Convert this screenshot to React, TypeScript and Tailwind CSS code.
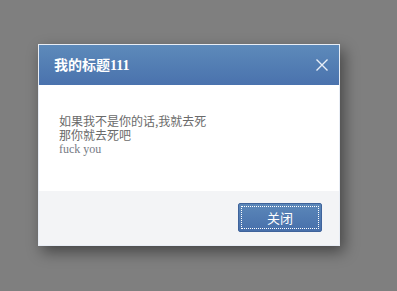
import React from "react";

export default function App() {
  return (
    <div className="w-[397px] h-[291px] bg-[#7f7f7f] pt-[44px] pl-[38px]" style={{ fontFamily: '"Liberation Serif", "Noto Sans CJK SC", serif' }}>
      <div className="w-[302px] h-[202px] border border-[#e8edf5] bg-white flex flex-col shadow-[4px_6px_14px_rgba(0,0,0,0.45)]">
        <div className="h-[40px] bg-gradient-to-b from-[#5d8aba] to-[#4a72ad] flex items-center justify-between pl-[15px] pr-[9px]">
          <span className="text-white text-[14px] font-bold" style={{ fontFamily: '"Liberation Serif", "Noto Sans CJK SC", serif' }}>我的标题111</span>
          <svg width="14" height="14" viewBox="0 0 14 14" className="mr-[1px]">
            <path d="M1.5 1.5 L12.5 12.5 M12.5 1.5 L1.5 12.5" stroke="#e8eef7" strokeWidth="1.4" />
          </svg>
        </div>
        <div className="h-[106px] pt-[29px] pl-[20px] text-[12px] leading-[14px] text-[#6a6a6a]" style={{ fontFamily: '"Noto Sans CJK SC", sans-serif' }}>
          <div>如果我不是你的话,我就去死</div>
          <div>那你就去死吧</div>
          <div className="text-[#767a84]" style={{ fontFamily: '"Liberation Serif", serif' }}>fuck you</div>
        </div>
        <div className="flex-1 bg-[#f3f4f6] flex items-start justify-end pt-[12px] pr-[17px]">
          <button className="w-[84px] h-[29px] rounded-[2px] border border-[#3f639b] bg-gradient-to-b from-[#5b87b9] to-[#4870ab] p-[2px]">
            <div className="w-full h-full border border-dotted border-white flex items-center justify-center text-white text-[13px]" style={{ fontFamily: '"Noto Sans CJK SC", sans-serif' }}>
              关闭
            </div>
          </button>
        </div>
      </div>
    </div>
  );
}
